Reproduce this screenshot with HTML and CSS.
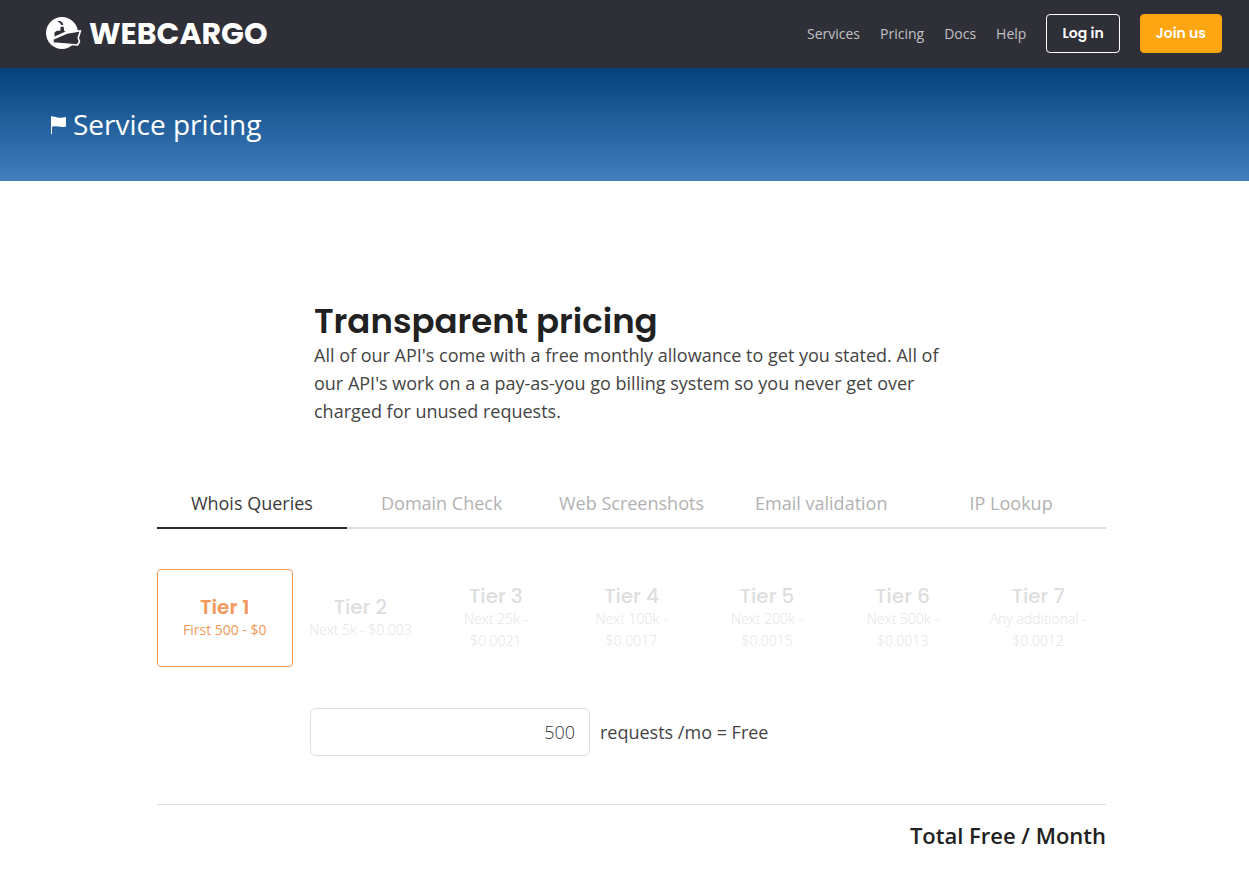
FILE: index.html
```html
<!DOCTYPE html>
<html lang="en">
<head>
  <meta charset="UTF-8" />
  <meta name="viewport" content="width=device-width, initial-scale=1">
  <title>WebCargo - Service pricing</title>
  <link rel="stylesheet" href="styles.css">
</head>
<body>
  <header class="navbar">
    <a href="#" class="logo">
      <svg width="36" height="34" viewBox="0 0 36 34" aria-hidden="true">
        <circle cx="16" cy="16" r="16" fill="#fff"/>
        <path d="M8.500 19.500v-4l2.500-1.800h3.300l.4-4h3l.4 4 1.400.8z" fill="#2f2f38"/>
        <path d="M11.500 4.200c3-.6 5.300.2 5.800 3.800h-2c-.5-2.300-2-1.800-3.800-3.800z" fill="#2f2f38"/>
        <path d="M7 22l14-6 13.500-2.200-2.300 7.200 1.300 3.500-2 3.500L7 26z" fill="#2f2f38" stroke="#fff" stroke-width="1.600" stroke-linejoin="round"/>
      </svg>
      <span>WEBCARGO</span>
    </a>
    <nav class="nav">
      <a href="#">Services</a>
      <a href="#">Pricing</a>
      <a href="#">Docs</a>
      <a href="#">Help</a>
      <a href="#" class="btn btn-outline">Log in</a>
      <a href="#" class="btn btn-primary">Join us</a>
    </nav>
  </header>

  <section class="banner">
    <svg width="17" height="18" viewBox="0 0 17 18" aria-hidden="true">
      <path d="M1 1c3-1.200 5 .6 8 .8 2.500.2 4.500-.6 7-.8v9.500c-3 1-5 .2-8 0-2.500-.2-4.500-.4-7 .5z" fill="#fff"/>
      <path d="M1.500 0v18" stroke="#fff"/>
    </svg>
    <h1>Service pricing</h1>
  </section>

  <main class="container">
    <div class="intro">
      <h2>Transparent pricing</h2>
      <p>All of our API's come with a free monthly allowance to get you stated. All of our API's work on a a pay-as-you go billing system so you never get over charged for unused requests.</p>
    </div>

    <div class="tabs" role="tablist">
      <button type="button" class="tab active" role="tab" aria-selected="true">Whois Queries</button>
      <button type="button" class="tab" role="tab">Domain Check</button>
      <button type="button" class="tab" role="tab">Web Screenshots</button>
      <button type="button" class="tab" role="tab">Email validation</button>
      <button type="button" class="tab" role="tab">IP Lookup</button>
    </div>

    <div class="tiers">
      <div class="tier active"><h3>Tier 1</h3><p>First 500 - $0</p></div>
      <div class="tier"><h3>Tier 2</h3><p>Next 5k - $0.003</p></div>
      <div class="tier"><h3>Tier 3</h3><p>Next 25k - $0.0021</p></div>
      <div class="tier"><h3>Tier 4</h3><p>Next 100k - $0.0017</p></div>
      <div class="tier"><h3>Tier 5</h3><p>Next 200k - $0.0015</p></div>
      <div class="tier"><h3>Tier 6</h3><p>Next 500k - $0.0013</p></div>
      <div class="tier"><h3>Tier 7</h3><p>Any additional - $0.0012</p></div>
    </div>

    <div class="calculator">
      <input type="text" id="requests" inputmode="numeric" value="500">
      <label for="requests">requests /mo = Free</label>
    </div>

    <div class="total">Total Free / Month</div>
  </main>
</body>
</html>
```
FILE: styles.css
```css
* {
  margin: 0;
  padding: 0;
  box-sizing: border-box;
}

body {
  font-family: "Open Sans", sans-serif;
  font-size: 18px;
  font-weight: 400;
  line-height: 28px;
  color: #444;
  background: #fff;
}

a {
  text-decoration: none;
}

/* Navbar */
.navbar {
  display: flex;
  justify-content: space-between;
  align-items: center;
  padding: 14px 27px 15px 46px;
  background: #2f2f38;
}

.logo {
  display: flex;
  align-items: center;
  gap: 7px;
  color: #fff;
  font-family: Poppins, Lato, sans-serif;
  font-size: 30px;
  font-weight: 700;
}

.nav {
  display: flex;
  align-items: center;
  gap: 20px;
  font-size: 14px;
  line-height: 26px;
}

.nav a {
  color: #c1c1c4;
}

.nav .btn {
  padding: 5px 15px;
  border: 1px solid #fff;
  border-radius: 4px;
  color: #fff;
  font-family: Poppins, "Open Sans", sans-serif;
  font-weight: 600;
  line-height: 27px;
}

.nav .btn-primary {
  background: #fda612;
  border-color: #fda612;
}

/* Banner */
.banner {
  display: flex;
  align-items: center;
  gap: 6px;
  padding: 36px 50px;
  background: linear-gradient(#04427b, #427ebf);
  color: #fff;
}

.banner h1 {
  font-size: 28px;
  font-weight: 400;
  line-height: 41px;
}

/* Pricing */
.container {
  padding: 120px 143px 36px 157px;
}

.intro {
  max-width: 790px;
  padding-left: 157px;
  margin-bottom: 54px;
}

.intro h2 {
  color: #212121;
  font-family: Poppins, Inter, sans-serif;
  font-size: 34px;
  font-weight: 600;
  line-height: 40px;
}

.tabs {
  display: grid;
  grid-template-columns: repeat(5, 1fr);
  margin-bottom: 40px;
}

.tab {
  padding: 10px 0;
  border: 0;
  border-bottom: 2px solid #dedede;
  background: none;
  color: #b2b2b2;
  font: inherit;
  cursor: pointer;
}

.tab.active {
  border-color: #2b2b2b;
  color: #3a3a3a;
}

.tiers {
  display: grid;
  grid-template-columns: repeat(7, 1fr);
  margin-bottom: 41px;
}

.tier {
  display: flex;
  flex-direction: column;
  justify-content: center;
  min-height: 98px;
  padding: 0 14px;
  border: 1px solid transparent;
  border-radius: 4px;
  color: #dedede;
  text-align: center;
}

.tier h3 {
  font-family: Poppins, Inter, sans-serif;
  font-size: 20px;
  font-weight: 500;
  line-height: 24px;
}

.tier p {
  color: #e4e4e4;
  font-size: 14px;
  font-weight: 300;
  line-height: 22px;
}

.tier.active {
  border-color: #f3995b;
  color: #f3995b;
}

.tier.active h3 {
  font-weight: 600;
}

.tier.active p {
  color: #f3995b;
  font-weight: 400;
}

.calculator {
  display: flex;
  align-items: center;
  gap: 10px;
  padding-left: 153px;
  margin-bottom: 48px;
}

.calculator input {
  width: 280px;
  height: 48px;
  padding: 0 14px;
  border: 1px solid #dedede;
  border-radius: 6px;
  background: #fff;
  color: #333;
  font: inherit;
  font-weight: 300;
  text-align: right;
}

.total {
  padding-top: 15px;
  border-top: 1px solid #dedede;
  color: #212121;
  font-size: 22px;
  font-weight: 600;
  line-height: 30px;
  text-align: right;
}
```
